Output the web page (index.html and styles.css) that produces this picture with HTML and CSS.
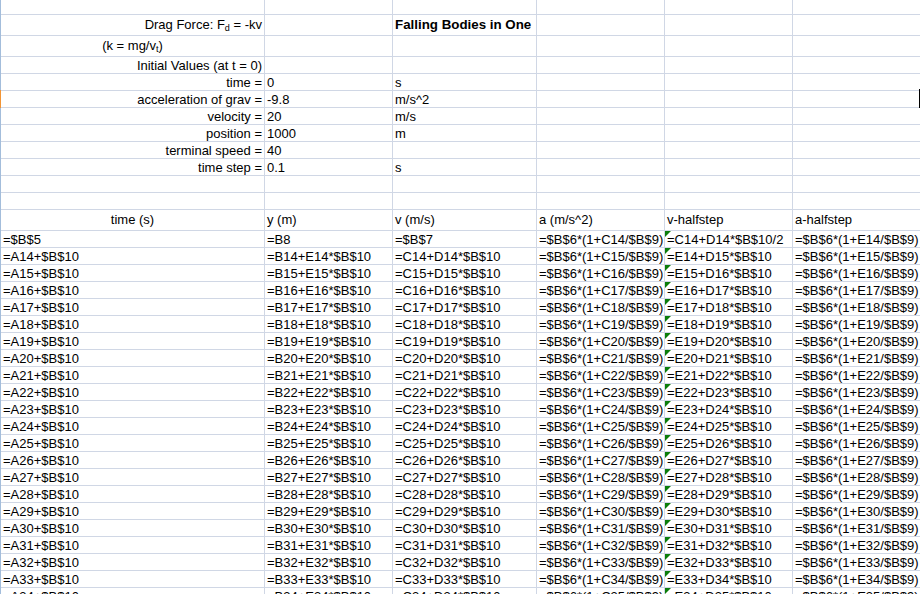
FILE: index.html
```html
<!DOCTYPE html>
<html lang="en">
<head>
<meta charset="utf-8">
<title>Falling Bodies in One Dimension</title>
<link rel="stylesheet" href="styles.css">
</head>
<body>
<div class="sheet">
<span class="row-mark"></span>
<span class="sel-mark"></span>
<table class="grid">
<colgroup><col class="col-a"><col class="col-b"><col class="col-c"><col class="col-d"><col class="col-e"><col class="col-f"></colgroup>
<tbody>
<tr class="r-top"><td></td><td></td><td></td><td></td><td></td><td></td></tr>
<tr class="r-tall"><td class="right">Drag Force: F<sub>d</sub> = -kv</td><td></td><td class="bold">Falling Bodies in One</td><td></td><td></td><td></td></tr>
<tr class="r-tall"><td class="center">(k = mg/v<sub>t</sub>)</td><td></td><td></td><td></td><td></td><td></td></tr>
<tr><td class="right">Initial Values (at t = 0)</td><td></td><td></td><td></td><td></td><td></td></tr>
<tr><td class="right">time =</td><td>0</td><td>s</td><td></td><td></td><td></td></tr>
<tr><td class="right">acceleration of grav =</td><td>-9.8</td><td>m/s^2</td><td></td><td></td><td></td></tr>
<tr><td class="right">velocity =</td><td>20</td><td>m/s</td><td></td><td></td><td></td></tr>
<tr><td class="right">position =</td><td>1000</td><td>m</td><td></td><td></td><td></td></tr>
<tr><td class="right">terminal speed =</td><td>40</td><td></td><td></td><td></td><td></td></tr>
<tr><td class="right">time step =</td><td>0.1</td><td>s</td><td></td><td></td><td></td></tr>
<tr><td></td><td></td><td></td><td></td><td></td><td></td></tr>
<tr><td></td><td></td><td></td><td></td><td></td><td></td></tr>
<tr class="r-tall"><td class="center">time (s)</td><td>y (m)</td><td>v (m/s)</td><td>a (m/s^2)</td><td>v-halfstep</td><td>a-halfstep</td></tr>
<tr><td>=$B$5</td><td>=B8</td><td>=$B$7</td><td>=$B$6*(1+C14/$B$9)</td><td class="flag">=C14+D14*$B$10/2</td><td>=$B$6*(1+E14/$B$9)</td></tr>
<tr><td>=A14+$B$10</td><td>=B14+E14*$B$10</td><td>=C14+D14*$B$10</td><td>=$B$6*(1+C15/$B$9)</td><td class="flag">=E14+D15*$B$10</td><td>=$B$6*(1+E15/$B$9)</td></tr>
<tr><td>=A15+$B$10</td><td>=B15+E15*$B$10</td><td>=C15+D15*$B$10</td><td>=$B$6*(1+C16/$B$9)</td><td class="flag">=E15+D16*$B$10</td><td>=$B$6*(1+E16/$B$9)</td></tr>
<tr><td>=A16+$B$10</td><td>=B16+E16*$B$10</td><td>=C16+D16*$B$10</td><td>=$B$6*(1+C17/$B$9)</td><td class="flag">=E16+D17*$B$10</td><td>=$B$6*(1+E17/$B$9)</td></tr>
<tr><td>=A17+$B$10</td><td>=B17+E17*$B$10</td><td>=C17+D17*$B$10</td><td>=$B$6*(1+C18/$B$9)</td><td class="flag">=E17+D18*$B$10</td><td>=$B$6*(1+E18/$B$9)</td></tr>
<tr><td>=A18+$B$10</td><td>=B18+E18*$B$10</td><td>=C18+D18*$B$10</td><td>=$B$6*(1+C19/$B$9)</td><td class="flag">=E18+D19*$B$10</td><td>=$B$6*(1+E19/$B$9)</td></tr>
<tr><td>=A19+$B$10</td><td>=B19+E19*$B$10</td><td>=C19+D19*$B$10</td><td>=$B$6*(1+C20/$B$9)</td><td class="flag">=E19+D20*$B$10</td><td>=$B$6*(1+E20/$B$9)</td></tr>
<tr><td>=A20+$B$10</td><td>=B20+E20*$B$10</td><td>=C20+D20*$B$10</td><td>=$B$6*(1+C21/$B$9)</td><td class="flag">=E20+D21*$B$10</td><td>=$B$6*(1+E21/$B$9)</td></tr>
<tr><td>=A21+$B$10</td><td>=B21+E21*$B$10</td><td>=C21+D21*$B$10</td><td>=$B$6*(1+C22/$B$9)</td><td class="flag">=E21+D22*$B$10</td><td>=$B$6*(1+E22/$B$9)</td></tr>
<tr><td>=A22+$B$10</td><td>=B22+E22*$B$10</td><td>=C22+D22*$B$10</td><td>=$B$6*(1+C23/$B$9)</td><td class="flag">=E22+D23*$B$10</td><td>=$B$6*(1+E23/$B$9)</td></tr>
<tr><td>=A23+$B$10</td><td>=B23+E23*$B$10</td><td>=C23+D23*$B$10</td><td>=$B$6*(1+C24/$B$9)</td><td class="flag">=E23+D24*$B$10</td><td>=$B$6*(1+E24/$B$9)</td></tr>
<tr><td>=A24+$B$10</td><td>=B24+E24*$B$10</td><td>=C24+D24*$B$10</td><td>=$B$6*(1+C25/$B$9)</td><td class="flag">=E24+D25*$B$10</td><td>=$B$6*(1+E25/$B$9)</td></tr>
<tr><td>=A25+$B$10</td><td>=B25+E25*$B$10</td><td>=C25+D25*$B$10</td><td>=$B$6*(1+C26/$B$9)</td><td class="flag">=E25+D26*$B$10</td><td>=$B$6*(1+E26/$B$9)</td></tr>
<tr><td>=A26+$B$10</td><td>=B26+E26*$B$10</td><td>=C26+D26*$B$10</td><td>=$B$6*(1+C27/$B$9)</td><td class="flag">=E26+D27*$B$10</td><td>=$B$6*(1+E27/$B$9)</td></tr>
<tr><td>=A27+$B$10</td><td>=B27+E27*$B$10</td><td>=C27+D27*$B$10</td><td>=$B$6*(1+C28/$B$9)</td><td class="flag">=E27+D28*$B$10</td><td>=$B$6*(1+E28/$B$9)</td></tr>
<tr><td>=A28+$B$10</td><td>=B28+E28*$B$10</td><td>=C28+D28*$B$10</td><td>=$B$6*(1+C29/$B$9)</td><td class="flag">=E28+D29*$B$10</td><td>=$B$6*(1+E29/$B$9)</td></tr>
<tr><td>=A29+$B$10</td><td>=B29+E29*$B$10</td><td>=C29+D29*$B$10</td><td>=$B$6*(1+C30/$B$9)</td><td class="flag">=E29+D30*$B$10</td><td>=$B$6*(1+E30/$B$9)</td></tr>
<tr><td>=A30+$B$10</td><td>=B30+E30*$B$10</td><td>=C30+D30*$B$10</td><td>=$B$6*(1+C31/$B$9)</td><td class="flag">=E30+D31*$B$10</td><td>=$B$6*(1+E31/$B$9)</td></tr>
<tr><td>=A31+$B$10</td><td>=B31+E31*$B$10</td><td>=C31+D31*$B$10</td><td>=$B$6*(1+C32/$B$9)</td><td class="flag">=E31+D32*$B$10</td><td>=$B$6*(1+E32/$B$9)</td></tr>
<tr><td>=A32+$B$10</td><td>=B32+E32*$B$10</td><td>=C32+D32*$B$10</td><td>=$B$6*(1+C33/$B$9)</td><td class="flag">=E32+D33*$B$10</td><td>=$B$6*(1+E33/$B$9)</td></tr>
<tr><td>=A33+$B$10</td><td>=B33+E33*$B$10</td><td>=C33+D33*$B$10</td><td>=$B$6*(1+C34/$B$9)</td><td class="flag">=E33+D34*$B$10</td><td>=$B$6*(1+E34/$B$9)</td></tr>
<tr><td>=A34+$B$10</td><td>=B34+E34*$B$10</td><td>=C34+D34*$B$10</td><td>=$B$6*(1+C35/$B$9)</td><td class="flag">=E34+D35*$B$10</td><td>=$B$6*(1+E35/$B$9)</td></tr>
</tbody>
</table>
</div>
</body>
</html>
```

FILE: styles.css
```css
html, body {
  margin: 0;
  padding: 0;
  background: #fff;
}

.sheet {
  position: relative;
  width: 920px;
  height: 594px;
  overflow: hidden;
}

.grid {
  table-layout: fixed;
  width: 921px;
  border-collapse: separate;
  border-spacing: 0;
  border-left: 1px solid #a3bddb;
  font-family: "Liberation Sans", Arial, sans-serif;
  font-size: 13px;
  color: #000;
}

.col-a { width: 264px; }
.col-b { width: 128px; }
.col-c { width: 144px; }
.col-d { width: 128px; }
.col-e { width: 128px; }
.col-f { width: 128px; }

.grid tr { height: 17px; }
.grid tr.r-top { height: 15px; }
.grid tr.r-tall { height: 21px; }

.grid td {
  box-sizing: border-box;
  padding: 0 2px;
  border-right: 1px solid #d0d7e5;
  border-bottom: 1px solid #d0d7e5;
  white-space: nowrap;
  overflow: hidden;
  line-height: 15px;
  vertical-align: bottom;
  position: relative;
}

.grid tr.r-tall td {
  vertical-align: middle;
  padding-bottom: 2px;
}

.grid td.right { text-align: right; }
.grid td.center { text-align: center; }
.grid td.bold {
  font-weight: bold;
  font-size: 13.33px;
}

.grid sub {
  font-size: 9px;
  line-height: 0;
  vertical-align: -2px;
}

.grid td.flag::before {
  content: "";
  position: absolute;
  left: 0;
  top: 0;
  width: 6px;
  height: 6px;
  background: #0a7d0a;
  clip-path: polygon(0 0, 100% 0, 0 100%);
}

.row-mark {
  position: absolute;
  left: 0;
  top: 90px;
  width: 1px;
  height: 18px;
  background: #f29536;
  z-index: 1;
}

.sel-mark {
  position: absolute;
  left: 919px;
  top: 89px;
  width: 1px;
  height: 19px;
  background: #000;
  z-index: 1;
}
```
